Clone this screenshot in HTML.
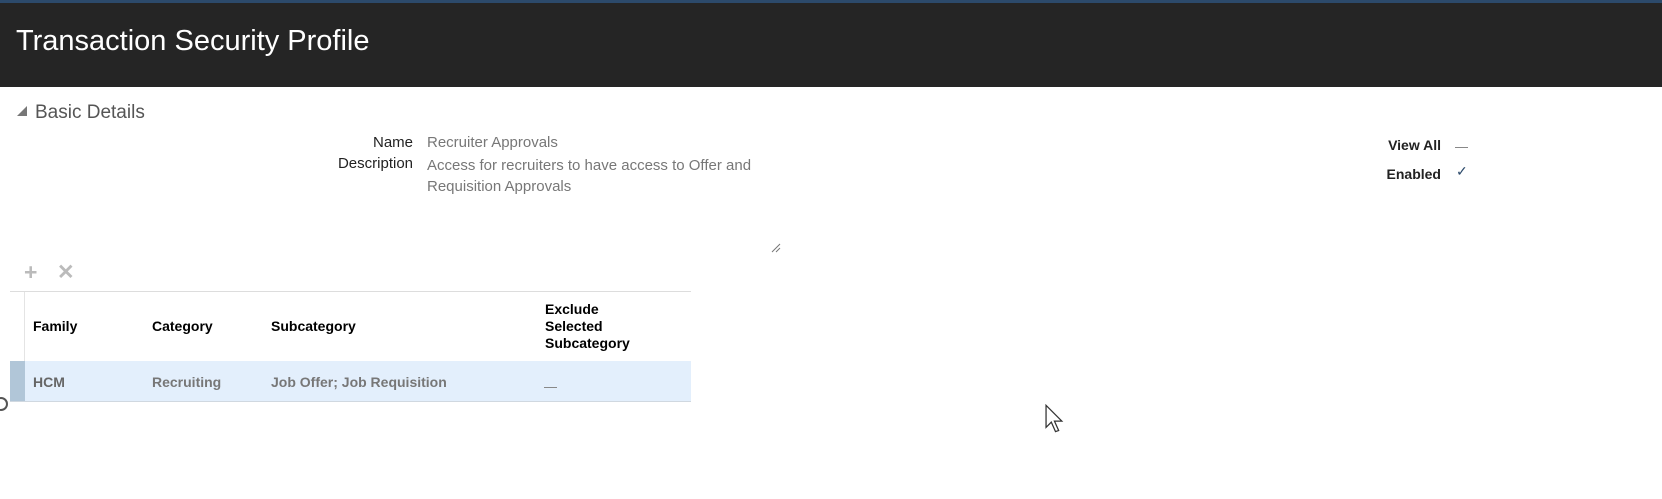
<!DOCTYPE html>
<html><head><style>
body{margin:0;width:1662px;height:499px;background:#fff;font-family:"Liberation Sans",sans-serif;position:relative;overflow:hidden}
.a{position:absolute;white-space:nowrap}
.hdr{position:absolute;left:0;top:0;width:1662px;height:87px;background:#252525;border-top:3px solid #2c4a6b;box-sizing:border-box}
.lbl{font-size:15px;color:#222;text-align:right}
.val{font-size:15px;color:#777}
.h{font-size:14px;font-weight:bold}
</style></head><body>
<div class="hdr"></div>
<div class="a" style="left:16px;top:25px;font-size:29px;color:#fff">Transaction Security Profile</div>
<div class="a" style="left:17px;top:106px;width:0;height:0;border-left:10px solid transparent;border-bottom:10px solid #777"></div>
<div class="a" style="left:35px;top:102px;font-size:19px;color:#555">Basic Details</div>
<div class="a lbl" style="left:313px;width:100px;top:134px">Name</div>
<div class="a lbl" style="left:313px;width:100px;top:155px">Description</div>
<div class="a val" style="left:427px;top:134px">Recruiter Approvals</div>
<div class="a val" style="left:427px;top:155px;line-height:21px">Access for recruiters to have access to Offer and<br>Requisition Approvals</div>
<svg class="a" style="left:770px;top:242px" width="12" height="12" viewBox="0 0 12 12"><path d="M2 10 L10 2 M6 10 L10 6" stroke="#777" stroke-width="1"/></svg>
<div class="a lbl" style="left:1340px;width:101px;top:137px;font-weight:bold;font-size:14px">View All</div>
<div class="a" style="left:1455px;top:147px;width:13px;height:1px;background:#888"></div>
<div class="a lbl" style="left:1340px;width:101px;top:166px;font-weight:bold;font-size:14px">Enabled</div>
<div class="a" style="left:1456px;top:163px;font-size:14px;color:#2c4a6b">✓</div>
<div class="a" style="left:24px;top:259px;font-size:23px;color:#bbb;font-weight:bold">+</div>
<div class="a" style="left:57px;top:260px;font-size:21px;color:#bbb;font-weight:bold">✕</div>
<div class="a" style="left:10px;top:291px;width:681px;height:1px;background:#ddd"></div>
<div class="a" style="left:24px;top:292px;width:1px;height:69px;background:#e4e4e4"></div>
<div class="a" style="left:10px;top:361px;width:681px;height:40px;background:#e3effc;border-bottom:1px solid #d0d8e0"></div>
<div class="a" style="left:10px;top:361px;width:15px;height:40px;background:#b1c6d8"></div>
<div class="a h" style="left:33px;top:318px">Family</div>
<div class="a h" style="left:152px;top:318px">Category</div>
<div class="a h" style="left:271px;top:318px">Subcategory</div>
<div class="a h" style="left:545px;top:301px;line-height:17px">Exclude<br>Selected<br>Subcategory</div>
<div class="a h" style="left:33px;top:374px;color:#666">HCM</div>
<div class="a h" style="left:152px;top:374px;color:#777">Recruiting</div>
<div class="a h" style="left:271px;top:374px;color:#777">Job Offer; Job Requisition</div>
<div class="a" style="left:544px;top:387px;width:13px;height:1px;background:#888"></div>
<div class="a" style="left:-6px;top:397px;width:10px;height:10px;border:2px solid #555;border-radius:50%"></div>
<svg class="a" style="left:1045px;top:404px" width="21" height="30" viewBox="0 0 20 28"><path d="M1 1 L1 22 L6 17 L10 26 L13 25 L9 16 L16 16 Z" fill="#fff" stroke="#333" stroke-width="1.2"/></svg>
</body></html>
